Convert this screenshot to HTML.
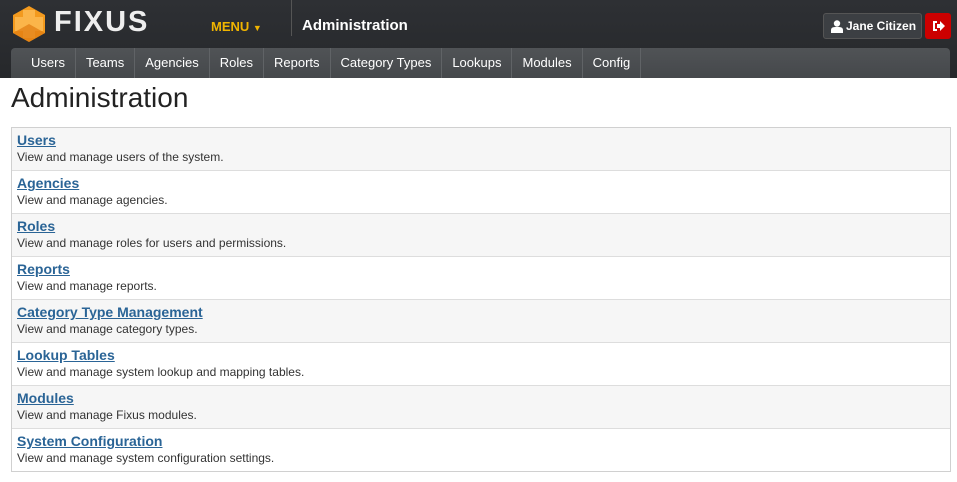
<!DOCTYPE html>
<html><head><meta charset="utf-8"><style>
*{margin:0;padding:0;box-sizing:border-box}
body{width:957px;height:482px;background:#fff;font-family:"Liberation Sans",Arial,sans-serif;position:relative;overflow:hidden}
.top{position:absolute;left:0;top:0;width:957px;height:78px;background:linear-gradient(#2e3034,#26282b)}
.logo{position:absolute;left:10px;top:5px}
.brand{position:absolute;left:54px;top:6px;color:#eee;font-size:29px;font-weight:bold;letter-spacing:2px}
.menu{position:absolute;left:211px;top:19px;color:#f0b400;font-size:13px;font-weight:bold}
.sep{position:absolute;left:291px;top:0;width:1px;height:36px;background:#555}
.title{position:absolute;left:302px;top:17px;color:#fff;font-size:15px;font-weight:bold}
.user{position:absolute;left:823px;top:13px;width:99px;height:26px;background:#3c3f43;border:1px solid #555;border-radius:3px;color:#fff;font-size:12px;font-weight:bold;padding:5px 0 0 22px;white-space:nowrap}
.logout{position:absolute;left:925px;top:13px;width:26px;height:26px;background:#c00;border-radius:3px}
.nav{position:absolute;left:11px;top:48px;width:939px;height:30px;background:linear-gradient(#505356,#45484b);border-radius:4px 4px 0 0;display:flex;padding-left:10px}
.nav span{color:#fff;font-size:13px;padding:7px 10px 0;height:30px;border-right:1px solid #606366;white-space:nowrap}
h1{position:absolute;left:11px;top:82px;font-size:28px;font-weight:normal;color:#222}
.list{position:absolute;left:11px;top:127px;width:940px;border:1px solid #d0d0d0}
.row{height:43px;border-top:1px solid #ddd;padding:4px 5px;background:#fff}
.row:first-child{border-top:none;height:42px}
.row:nth-child(odd){background:#f6f6f6}
.row a{display:block;color:#2a6496;font-weight:bold;font-size:14px;text-decoration:underline;line-height:17px}
.row div{font-size:12px;color:#333;line-height:16px}
</style></head><body>
<div class="top">
<svg class="logo" width="38" height="38" viewBox="0 0 38 38"><polygon points="19,1 35,10 35,28 19,37 3,28 3,10" fill="#f39a1e"/><path d="M13,5 L25,5 L25,12 L33,12 L33,26 L25,26 L25,33 L13,33 L13,26 L5,26 L5,12 L13,12Z" fill="#fbb54a"/><polygon points="19,19 35,28 19,37 3,28" fill="#e07a10" opacity=".7"/></svg>
<div class="brand">FIXUS</div>
<div class="menu">MENU <span style="font-size:9px">▼</span></div>
<div class="sep"></div>
<div class="title">Administration</div>
<div class="user"><svg style="position:absolute;left:7px;top:6px" width="12" height="13" viewBox="0 0 12 13"><circle cx="6" cy="3.5" r="3.2" fill="#fff"/><path d="M0,13 L0,10 Q0,7 4,7 L8,7 Q12,7 12,10 L12,13Z" fill="#fff"/></svg>Jane Citizen</div>
<div class="logout"><svg width="26" height="26" viewBox="0 0 26 26"><path d="M8,8 L12,8 L12,10 L10,10 L10,16 L12,16 L12,18 L8,18Z" fill="#fff"/><path d="M12,11 L15,11 L15,8 L20,13 L15,18 L15,15 L12,15Z" fill="#fff"/></svg></div>
<div class="nav"><span>Users</span><span>Teams</span><span>Agencies</span><span>Roles</span><span>Reports</span><span>Category Types</span><span>Lookups</span><span>Modules</span><span>Config</span></div>
</div>
<h1>Administration</h1>
<div class="list">
<div class="row"><a>Users</a><div>View and manage users of the system.</div></div>
<div class="row"><a>Agencies</a><div>View and manage agencies.</div></div>
<div class="row"><a>Roles</a><div>View and manage roles for users and permissions.</div></div>
<div class="row"><a>Reports</a><div>View and manage reports.</div></div>
<div class="row"><a>Category Type Management</a><div>View and manage category types.</div></div>
<div class="row"><a>Lookup Tables</a><div>View and manage system lookup and mapping tables.</div></div>
<div class="row"><a>Modules</a><div>View and manage Fixus modules.</div></div>
<div class="row"><a>System Configuration</a><div>View and manage system configuration settings.</div></div>
</div>
</body></html>
